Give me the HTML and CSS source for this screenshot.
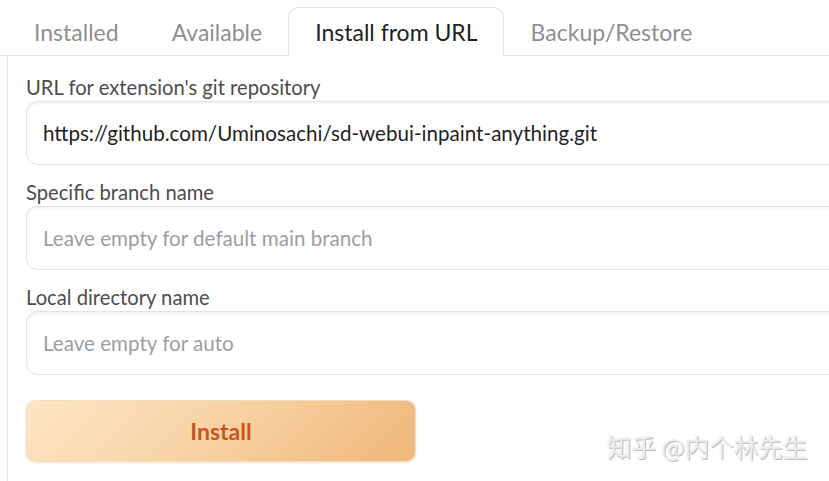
FILE: index.html
```html
<!DOCTYPE html>
<html>
<head>
<meta charset="utf-8">
<link rel="stylesheet" href="styles.css">
</head>
<body>
<div class="page">
  <div class="tabs">
    <div class="tab">Installed</div>
    <div class="tab">Available</div>
    <div class="tab active">Install from URL</div>
    <div class="tab">Backup/Restore</div>
  </div>
  <div class="panel">
    <label class="field">
      <span class="label">URL for extension's git repository</span>
      <input class="input" type="text" value="https://github.com/Uminosachi/sd-webui-inpaint-anything.git">
    </label>
    <label class="field">
      <span class="label">Specific branch name</span>
      <input class="input" type="text" placeholder="Leave empty for default main branch">
    </label>
    <label class="field">
      <span class="label">Local directory name</span>
      <input class="input" type="text" placeholder="Leave empty for auto">
    </label>
    <button class="install">Install</button>
  </div>
  <div class="watermark">知乎 @内个林先生</div>
</div>
</body>
</html>
```

FILE: styles.css
```css
html, body {
  margin: 0;
  padding: 0;
  background: #ffffff;
  overflow: hidden;
}
.page {
  position: relative;
  width: 829px;
  height: 481px;
  overflow: hidden;
  font-family: "Lato", "Noto Sans CJK SC", sans-serif;
}
.tabs {
  display: flex;
  padding: 7px 0 0 7px;
  border-bottom: 1px solid #e4e4e4;
  height: 48px;
}
.tab {
  height: 48px;
  box-sizing: border-box;
  padding: 0 25px 0 26px;
  display: flex;
  align-items: center;
  font-size: 23px;
  color: #8f8f8f;
  border: 1px solid transparent;
  border-bottom: none;
  border-top-left-radius: 11px;
  border-top-right-radius: 11px;
}
.tab.active {
  color: #1f1f1f;
  background: #ffffff;
  border-color: #e4e4e4;
  margin-bottom: -1px;
  height: 49px;
}
.panel {
  margin-left: 7px;
  border-left: 1px solid #e6e6e6;
  padding: 19px 0 0 18px;
  width: 900px;
  height: 430px;
  box-sizing: border-box;
}
.field {
  display: flex;
  flex-direction: column;
  margin-bottom: 15px;
}
.label {
  font-size: 20.2px;
  line-height: 24px;
  height: 24px;
  color: #4d4d4d;
  margin-bottom: 2px;
}
.input {
  height: 64px;
  box-sizing: border-box;
  border: 1px solid #e3e3e3;
  border-radius: 11px;
  padding: 0 16px;
  font-family: inherit;
  font-size: 20.6px;
  color: #1f1f1f;
  background: #ffffff;
  box-shadow: inset 0 2px 3px rgba(0, 0, 0, 0.05);
  outline: none;
  width: 900px;
}
.input::placeholder {
  color: #9b9ea4;
}
.install {
  margin-top: 25px;
  width: 390px;
  height: 62px;
  border: 1px solid #f3dcbc;
  border-radius: 10px;
  background: linear-gradient(135deg, #fde5c4 0%, #f8d4a6 45%, #efb679 100%);
  box-shadow: 0 1px 3px rgba(200, 140, 80, 0.25);
  font-family: inherit;
  font-size: 23px;
  font-weight: 700;
  color: #c7551f;
  display: block;
}
.watermark {
  position: absolute;
  left: 607px;
  top: 432px;
  font-size: 24.5px;
  line-height: 30px;
  color: #ececec;
  font-family: "Noto Sans CJK SC", sans-serif;
  text-shadow: 1px 1px 0 #bdbdbd, -1px -1px 0 #f7f7f7;
  white-space: nowrap;
}
```
